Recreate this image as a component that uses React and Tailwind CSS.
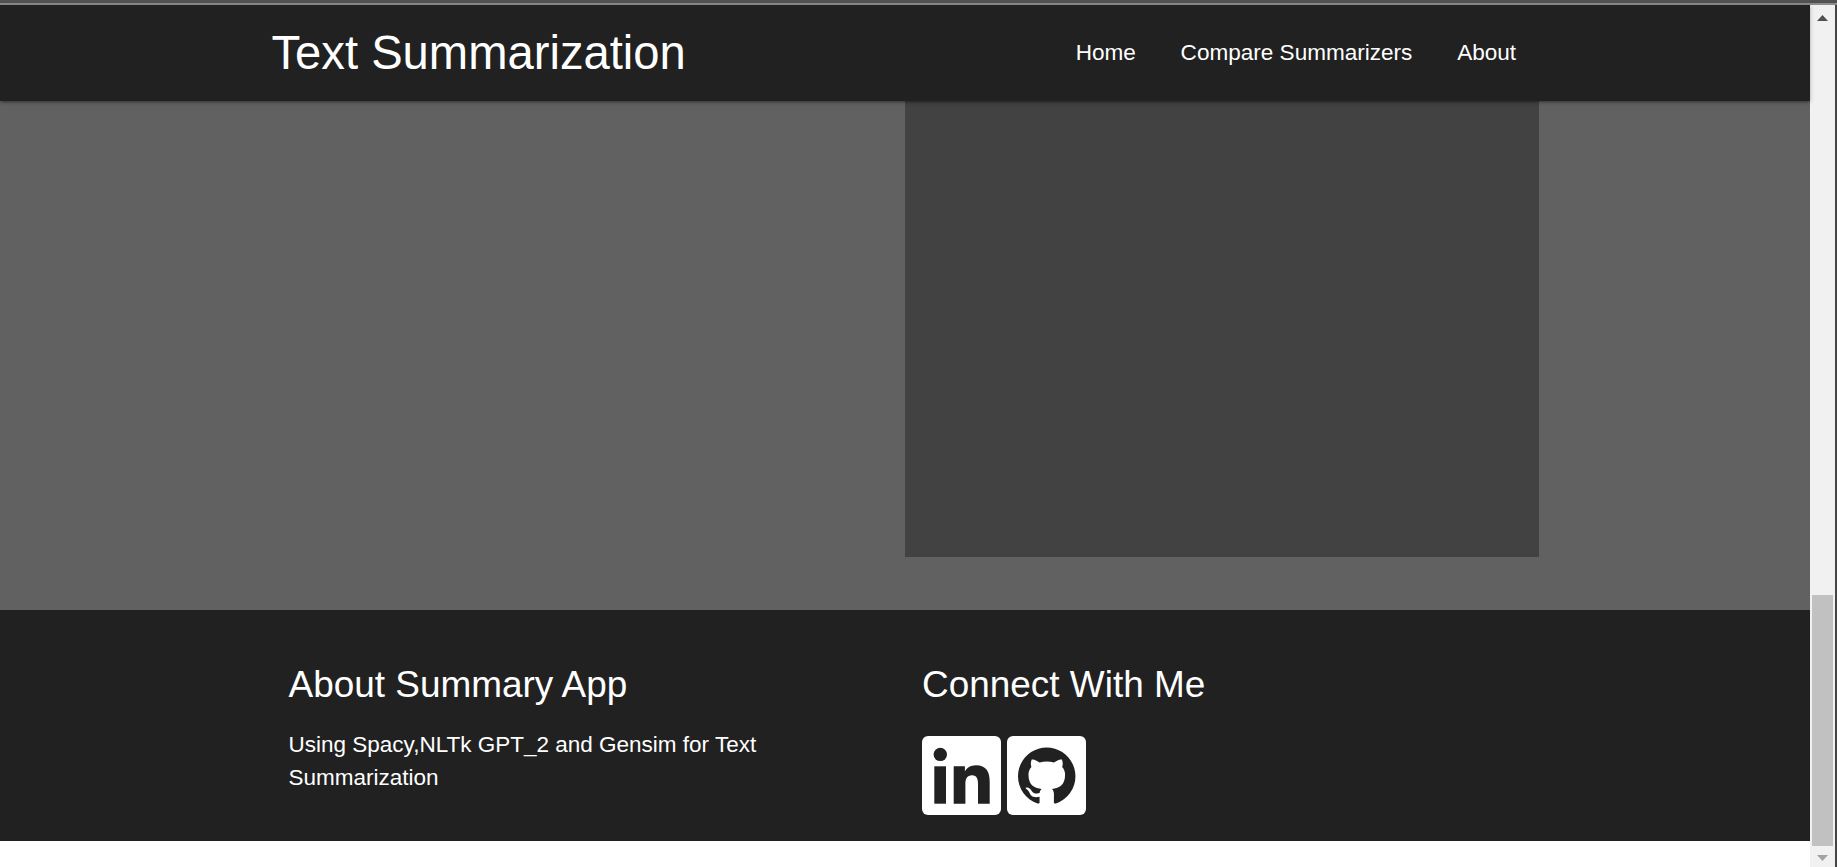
import React from "react";

const font = "font-['Liberation_Sans',Arial,sans-serif]";

const LinkedinIcon = () => (
  <svg width="79" height="79" viewBox="0 0 79 79" aria-label="LinkedIn">
    <rect width="79" height="79" rx="6" fill="#fff" />
    <circle cx="18.3" cy="18.4" r="6.7" fill="#212121" />
    <rect x="12.3" y="30.3" width="11.7" height="37.4" fill="#212121" />
    <path
      d="M31.7 30.3h11.2v5.1c1.7-3.2 5.6-6.1 11-6.1 10.6 0 13.8 6.8 13.8 16.4v22h-11.7V48.2c0-4.800-.9-8.900-6-8.900-5.100 0-6.600 3.700-6.600 8.500v19.900H31.700z"
      fill="#212121"
    />
  </svg>
);

const GithubIcon = () => (
  <svg width="79" height="79" viewBox="0 0 79 79" aria-label="GitHub">
    <rect width="79" height="79" rx="6" fill="#fff" />
    <path
      transform="translate(11 11.600) scale(3.590)"
      fill="#212121"
      fillRule="evenodd"
      d="M8 0C3.58 0 0 3.58 0 8c0 3.54 2.29 6.53 5.47 7.59.4.07.55-.17.55-.38 0-.19-.01-.82-.01-1.49-2.01.37-2.53-.49-2.69-.94-.09-.23-.48-.94-.82-1.13-.28-.15-.68-.52-.01-.53.63-.01 1.08.58 1.23.82.72 1.21 1.87.87 2.33.66.07-.52.28-.87.51-1.07-1.78-.2-3.64-.89-3.64-3.95 0-.87.31-1.59.82-2.15-.08-.2-.36-1.02.08-2.12 0 0 .67-.21 2.2.82.64-.18 1.32-.27 2-.27.68 0 1.36.09 2 .27 1.53-1.04 2.2-.82 2.2-.82.44 1.1.16 1.92.08 2.12.51.56.82 1.27.82 2.15 0 3.07-1.87 3.75-3.65 3.95.29.25.54.73.54 1.48 0 1.07-.01 1.93-.01 2.2 0 .21.15.46.55.38A8.013 8.013 0 0016 8c0-4.42-3.58-8-8-8z"
    />
  </svg>
);

const Navbar = () => (
  <nav className="relative z-10 h-[96px] shrink-0 bg-[#212121] text-white shadow-[0_2px_2px_0_rgba(0,0,0,0.14),0_3px_1px_-2px_rgba(0,0,0,0.12),0_1px_5px_0_rgba(0,0,0,0.2)]">
    <div className="mx-auto flex h-full w-[70%] items-center justify-between">
      <a className="mb-[1px] text-[47.2px] leading-none">Text Summarization</a>
      <ul className="mb-[1px] flex text-[22.55px]">
        <li className="px-[22.4px]">Home</li>
        <li className="px-[22.4px]">Compare Summarizers</li>
        <li className="px-[22.4px]">About</li>
      </ul>
    </div>
  </nav>
);

const Footer = () => (
  <footer className="h-[231px] shrink-0 bg-[#212121] text-white">
    <div className="mx-auto grid w-[70%] grid-cols-2">
      <div className="px-[17px] pt-[53px]">
        <h5 className="text-[36.95px] leading-[44px]">About Summary App</h5>
        <p className="mt-[21px] text-[22.5px] leading-[33px]">
          Using Spacy,NLTk GPT_2 and Gensim for Text Summarization
        </p>
      </div>
      <div className="px-[17px] pt-[53px]">
        <h5 className="text-[36.95px] leading-[44px]">Connect With Me</h5>
        <div className="mt-[29px] flex gap-[6px]">
          <LinkedinIcon />
          <GithubIcon />
        </div>
      </div>
    </div>
  </footer>
);

const Scrollbar = () => (
  <div className="flex w-[25px] shrink-0 flex-col items-center bg-[#f1f1f1] px-[2px]">
    <svg width="11" height="6" viewBox="0 0 11 6" className="mt-[10px]">
      <path d="M5.500 0 11 6H0z" fill="#505050" />
    </svg>
    <div className="mt-[574px] h-[251px] w-[21px] bg-[#c1c1c1]" />
    <svg width="11" height="6" viewBox="0 0 11 6" className="mt-[9px]">
      <path d="M0 0h11L5.500 6z" fill="#a3a3a3" />
    </svg>
  </div>
);

const App = () => (
  <div className={`flex h-screen flex-col overflow-hidden bg-white ${font}`}>
    <div className="h-[3px] shrink-0 bg-[#525252]" />
    <div className="h-[2px] shrink-0 bg-[#8c8c8c]" />
    <div className="flex min-h-0 flex-1">
      <div className="flex min-w-0 flex-1 flex-col">
        <Navbar />
        <main className="h-[509px] shrink-0 bg-[#616161]">
          <div className="mx-auto grid w-[70%] grid-cols-2">
            <div />
            <div className="h-[456px] bg-[#424242]" />
          </div>
        </main>
        <Footer />
      </div>
      <Scrollbar />
      <div className="w-[2px] shrink-0 bg-[#454545]" />
    </div>
  </div>
);

export default App;
